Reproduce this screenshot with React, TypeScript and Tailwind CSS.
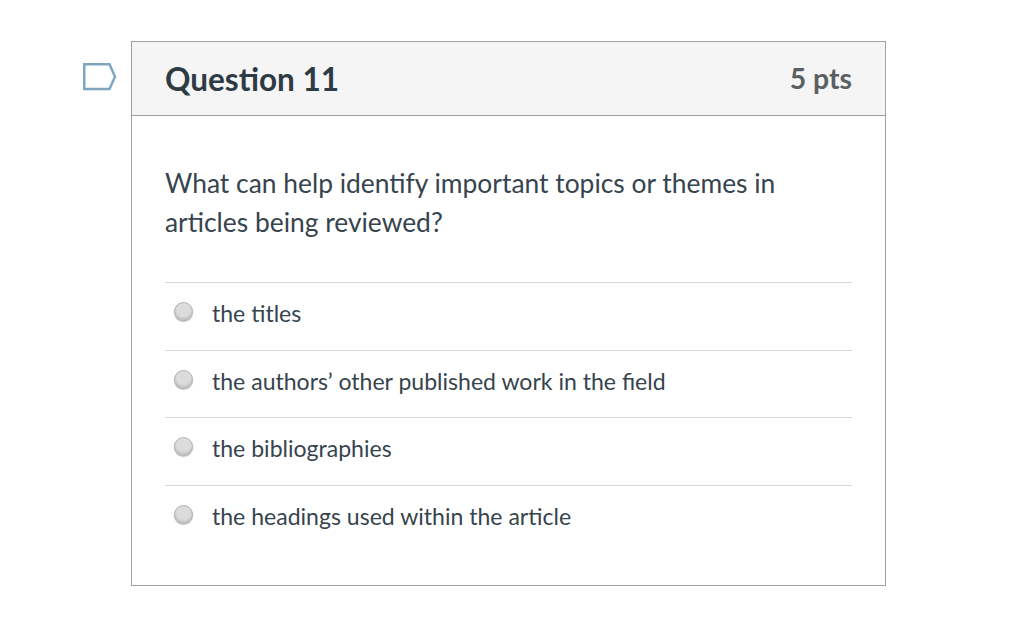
export default function App() {
  const answers = ["the titles", "the authors’ other published work in the field", "the bibliographies", "the headings used within the article"];
  return (
    <div className="w-[1024px] h-[640px] bg-white pt-[41px] pl-[131px] relative antialiased" style={{ fontFamily: "Lato, sans-serif" }}>
      <svg className="absolute left-[82px] top-[62px]" width="36" height="30" viewBox="0 0 36 30" fill="none">
        <path d="M2.25 2.25H27.5L33 14.75L27.5 27H2.25Z" stroke="#7fa6c0" strokeWidth="2.5" fill="#fff" />
      </svg>
      <div className="w-[755px] h-[545px] border border-[#a0a0a0] flex flex-col">
        <div className="h-[74px] bg-[#f5f5f5] border-b border-[#a0a0a0] flex items-center justify-between px-[33px]">
          <span className="text-[31.5px] font-bold text-[#2d3b45] mt-[2px]">Question 11</span>
          <span className="text-[28.4px] font-bold text-[#5a5f63]">5 pts</span>
        </div>
        <div className="px-[33px] pt-[48px]">
          <p className="text-[26.4px] leading-[39px] text-[#36444e] w-[640px]">What can help identify important topics or themes in articles being reviewed?</p>
          <div className="mt-[40px]">
            {answers.map((a) => (
              <div key={a} className="h-[67.5px] border-t border-[#d5d7d8] flex items-center pb-[5px]">
                <span className="ml-[9px] -mt-[4px] w-[19px] h-[19px] rounded-full border border-[#b5b5b5] bg-[#dcdcdc] shadow-[inset_0_-2px_2px_rgba(0,0,0,0.12),0_1px_1px_rgba(0,0,0,0.25)]" />
                <span className="ml-[19px] text-[23.05px] text-[#36444e]">{a}</span>
              </div>
            ))}
          </div>
        </div>
      </div>
    </div>
  );
}
